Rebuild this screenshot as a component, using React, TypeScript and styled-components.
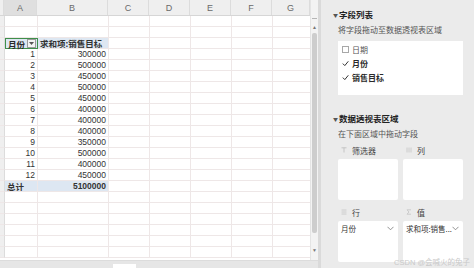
import React from "react";
import styled, { createGlobalStyle } from "styled-components";

const GlobalStyle = createGlobalStyle`
  html, body {
    margin: 0;
    padding: 0;
    background: #ffffff;
  }
  body {
    font-family: "Liberation Sans", "Noto Sans CJK SC", sans-serif;
    color: #333333;
  }
`;

const COLS = [
  { key: "corner", label: "", width: 4 },
  { key: "A", label: "A", width: 33 },
  { key: "B", label: "B", width: 71 },
  { key: "C", label: "C", width: 41 },
  { key: "D", label: "D", width: 41 },
  { key: "E", label: "E", width: 41 },
  { key: "F", label: "F", width: 41 },
  { key: "G", label: "G", width: 38 },
];

const DATA: [number, number][] = [
  [1, 300000],
  [2, 500000],
  [3, 450000],
  [4, 500000],
  [5, 450000],
  [6, 400000],
  [7, 400000],
  [8, 400000],
  [9, 350000],
  [10, 500000],
  [11, 400000],
  [12, 450000],
];

const Page = styled.div`
  display: flex;
  width: 474px;
  height: 268px;
  overflow: hidden;
  background: #ffffff;
`;

const Sheet = styled.div`
  display: flex;
  flex-direction: column;
  width: 318px;
  height: 268px;
`;

const SheetBody = styled.div`
  display: flex;
  flex: 1;
  min-height: 0;
`;

const Grid = styled.div`
  display: flex;
  flex-direction: column;
  width: 310px;
  overflow: hidden;
`;

const HeaderRow = styled.div`
  display: flex;
  height: 16px;
  flex-shrink: 0;
  background: #efefef;
  border-bottom: 1px solid #d6d6d6;
  box-sizing: border-box;
`;

const HeaderCell = styled.div<{ $w: number; $active?: boolean }>`
  width: ${({ $w }) => $w}px;
  flex-shrink: 0;
  display: flex;
  align-items: center;
  justify-content: center;
  font-size: 9px;
  color: #6a6a6a;
  background: ${({ $active }) => ($active ? "#dfdfdf" : "transparent")};
  border-right: 1px solid #dcdcdc;
  box-sizing: border-box;
`;

const Row = styled.div`
  display: flex;
  height: 11px;
  flex-shrink: 0;
`;

const Cell = styled.div<{ $w: number; $bg?: string; $align?: string; $bold?: boolean; $corner?: boolean }>`
  width: ${({ $w }) => $w}px;
  flex-shrink: 0;
  display: flex;
  align-items: center;
  justify-content: ${({ $align }) => $align || "flex-start"};
  padding: 0 2px;
  box-sizing: border-box;
  font-size: 8.5px;
  font-weight: ${({ $bold }) => ($bold ? 700 : 400)};
  color: #333333;
  background: ${({ $corner, $bg }) => ($corner ? "#efefef" : $bg || "transparent")};
  border-right: 1px solid ${({ $corner }) => ($corner ? "#dcdcdc" : "#eee7e7")};
  border-bottom: 1px solid #eee7e7;
  white-space: nowrap;
  overflow: hidden;
`;

const CjkText = styled.span`
  font-family: "Noto Sans CJK SC", sans-serif;
  font-size: 8.5px;
`;

const PivotHeadCell = styled.div<{ $w: number }>`
  width: ${({ $w }) => $w}px;
  flex-shrink: 0;
  display: flex;
  align-items: center;
  justify-content: space-between;
  padding: 0 1px 0 2px;
  box-sizing: border-box;
  background: #dde7f2;
  border: 1px solid #3f8f4a;
  font-family: "Noto Sans CJK SC", sans-serif;
  font-size: 8.5px;
  font-weight: 700;
  color: #2a2a2a;
`;

const DropBtn = styled.div`
  width: 7px;
  height: 7px;
  border: 1px solid #9a9a9a;
  background: #f4f4f4;
  display: flex;
  align-items: center;
  justify-content: center;
`;

const VScroll = styled.div`
  width: 8px;
  display: flex;
  flex-direction: column;
  align-items: center;
  background: #f3f3f3;
  border-left: 1px solid #e4e4e4;
  box-sizing: border-box;
  padding-top: 18px;
`;

const ScrollDash = styled.div`
  width: 5px;
  height: 1px;
  background: #b5b5b5;
`;

const ScrollArrow = styled.div`
  font-size: 5px;
  line-height: 6px;
  color: #777;
  margin-top: 5px;
`;

const Thumb = styled.div`
  width: 5px;
  height: 200px;
  margin-top: 3px;
  background: #cdcdcd;
  border-radius: 2px;
`;

const BottomArrow = styled(ScrollArrow)`
  margin-top: 14px;
`;

const HBar = styled.div`
  height: 8px;
  display: flex;
  background: #e6e6e6;
  border-top: 1px solid #dcdcdc;
  box-sizing: border-box;
  padding-left: 113px;
  align-items: flex-end;
`;

const HThumb = styled.div`
  width: 23px;
  height: 4px;
  background: #ffffff;
`;

const Divider = styled.div`
  width: 3px;
  background: #dadada;
`;

const Panel = styled.div`
  position: relative;
  flex: 1;
  background: #ebebeb;
  padding: 6px 11px 0 12px;
  box-sizing: border-box;
  display: flex;
  flex-direction: column;
  font-family: "Noto Sans CJK SC", sans-serif;
`;

const SectionTitle = styled.div<{ $top: number }>`
  display: flex;
  align-items: center;
  gap: 2px;
  height: 12px;
  margin-top: ${({ $top }) => $top}px;
  font-size: 8.5px;
  font-weight: 700;
  color: #222;
`;

const Caret = styled.span`
  font-size: 5px;
  color: #555;
  width: 4px;
`;

const Hint = styled.div`
  margin-top: 4px;
  margin-left: 5px;
  height: 12px;
  line-height: 12px;
  font-size: 8px;
  color: #555;
`;

const FieldBox = styled.div`
  margin: 5px 0 0 5px;
  height: 56px;
  background: #ffffff;
  padding-top: 1px;
  box-sizing: border-box;
`;

const FieldItem = styled.div<{ $muted?: boolean }>`
  display: flex;
  align-items: center;
  gap: 3px;
  height: 14px;
  padding-left: 4px;
  font-size: 8px;
  color: ${({ $muted }) => ($muted ? "#555" : "#2a2a2a")};
  font-weight: ${({ $muted }) => ($muted ? 400 : 700)};
`;

const Check = styled.div<{ $on?: boolean }>`
  width: 7px;
  height: 7px;
  border: ${({ $on }) => ($on ? "none" : "1px solid #a8a8a8")};
  box-sizing: border-box;
  display: flex;
  align-items: center;
  justify-content: center;
`;

const AreaGrid = styled.div`
  margin: 4px 0 0 5px;
  display: grid;
  grid-template-columns: 60px 60px;
  column-gap: 5px;
`;

const AreaLabel = styled.div`
  display: flex;
  align-items: center;
  gap: 5px;
  height: 12px;
  padding-left: 3px;
  font-size: 8px;
  color: #444;
`;

const AreaBox = styled.div<{ $gapTop: number }>`
  height: 41px;
  margin-top: ${({ $gapTop }) => $gapTop}px;
  margin-bottom: 6px;
  background: #ffffff;
  border-radius: 2px;
  box-sizing: border-box;
`;

const AreaItem = styled.div`
  display: flex;
  align-items: center;
  justify-content: space-between;
  height: 15px;
  padding: 0 4px 0 3px;
  font-size: 7.5px;
  color: #333;
  white-space: nowrap;
`;

const Watermark = styled.div`
  position: absolute;
  right: 4px;
  bottom: 1px;
  font-size: 7.5px;
  color: #c9c9c9;
  font-family: "Liberation Sans", "Noto Sans CJK SC", sans-serif;
`;

const Chevron = () => (
  <svg width="7" height="5" viewBox="0 0 7 5">
    <path d="M0.5 0.8 L3.5 3.8 L6.5 0.8" fill="none" stroke="#777" strokeWidth="0.8" />
  </svg>
);

const Tick = () => (
  <svg width="7" height="7" viewBox="0 0 7 7">
    <path d="M0.8 3.6 L2.8 5.6 L6.3 1.3" fill="none" stroke="#333" strokeWidth="1" />
  </svg>
);

const FilterIcon = () => (
  <svg width="6" height="6" viewBox="0 0 6 6">
    <path d="M0.5 0.8 H5.5 M3 0.8 V5.5" stroke="#bbb" strokeWidth="0.8" fill="none" />
  </svg>
);

const ColIcon = () => (
  <svg width="6" height="6" viewBox="0 0 6 6">
    <path d="M1 0.5 V5.5 M3 0.5 V5.5 M5 0.5 V5.5" stroke="#c4c4c4" strokeWidth="0.8" />
  </svg>
);

const RowIcon = () => (
  <svg width="6" height="6" viewBox="0 0 6 6">
    <path d="M0.5 1 H5.5 M0.5 3 H5.5 M0.5 5 H5.5" stroke="#c4c4c4" strokeWidth="0.8" />
  </svg>
);

const SumIcon = () => (
  <svg width="6" height="6" viewBox="0 0 6 6">
    <path d="M5 0.8 H1 L3 3 L1 5.2 H5" stroke="#c4c4c4" strokeWidth="0.8" fill="none" />
  </svg>
);

const EMPTY_ROWS = 22;

const App: React.FC = () => {
  const renderRow = (i: number) => {
    const cells: React.ReactNode[] = [];
    COLS.forEach((c, ci) => {
      if (ci === 0) {
        cells.push(<Cell key={c.key} $w={c.width} $corner />);
        return;
      }
      if (i === 2 && c.key === "A") {
        cells.push(
          <PivotHeadCell key={c.key} $w={c.width}>
            月份
            <DropBtn>
              <svg width="5" height="3" viewBox="0 0 5 3">
                <path d="M0 0 H5 L2.5 3 Z" fill="#555" />
              </svg>
            </DropBtn>
          </PivotHeadCell>
        );
        return;
      }
      if (i === 2 && c.key === "B") {
        cells.push(
          <Cell key={c.key} $w={c.width} $bg="#dde7f2" $bold>
            <CjkText>求和项:销售目标</CjkText>
          </Cell>
        );
        return;
      }
      const d = DATA[i - 3];
      if (d && c.key === "A") {
        cells.push(
          <Cell key={c.key} $w={c.width} $align="flex-end">
            {d[0]}
          </Cell>
        );
        return;
      }
      if (d && c.key === "B") {
        cells.push(
          <Cell key={c.key} $w={c.width} $align="flex-end">
            {d[1]}
          </Cell>
        );
        return;
      }
      if (i === 15 && c.key === "A") {
        cells.push(
          <Cell key={c.key} $w={c.width} $bg="#dde7f2" $bold>
            <CjkText>总计</CjkText>
          </Cell>
        );
        return;
      }
      if (i === 15 && c.key === "B") {
        cells.push(
          <Cell key={c.key} $w={c.width} $bg="#dde7f2" $bold $align="flex-end">
            5100000
          </Cell>
        );
        return;
      }
      cells.push(<Cell key={c.key} $w={c.width} />);
    });
    return <Row key={i}>{cells}</Row>;
  };

  return (
    <>
      <GlobalStyle />
      <Page>
        <Sheet>
          <SheetBody>
            <Grid>
              <HeaderRow>
                {COLS.map((c) => (
                  <HeaderCell key={c.key} $w={c.width} $active={c.key === "A"}>
                    {c.label}
                  </HeaderCell>
                ))}
              </HeaderRow>
              {Array.from({ length: EMPTY_ROWS }, (_, i) => renderRow(i))}
            </Grid>
            <VScroll>
              <ScrollDash />
              <ScrollArrow>▲</ScrollArrow>
              <Thumb />
              <BottomArrow>▼</BottomArrow>
            </VScroll>
          </SheetBody>
          <HBar>
            <HThumb />
          </HBar>
        </Sheet>
        <Divider />
        <Panel>
          <SectionTitle $top={2}>
            <Caret>▼</Caret>字段列表
          </SectionTitle>
          <Hint>将字段拖动至数据透视表区域</Hint>
          <FieldBox>
            <FieldItem $muted>
              <Check />
              日期
            </FieldItem>
            <FieldItem>
              <Check $on>
                <Tick />
              </Check>
              月份
            </FieldItem>
            <FieldItem>
              <Check $on>
                <Tick />
              </Check>
              销售目标
            </FieldItem>
          </FieldBox>
          <SectionTitle $top={17}>
            <Caret>▼</Caret>数据透视表区域
          </SectionTitle>
          <Hint>在下面区域中拖动字段</Hint>
          <AreaGrid>
            <AreaLabel>
              <FilterIcon />
              筛选器
            </AreaLabel>
            <AreaLabel>
              <ColIcon />
              列
            </AreaLabel>
            <AreaBox $gapTop={3} />
            <AreaBox $gapTop={3} />
            <AreaLabel>
              <RowIcon />
              行
            </AreaLabel>
            <AreaLabel>
              <SumIcon />
              值
            </AreaLabel>
            <AreaBox $gapTop={3}>
              <AreaItem>
                月份
                <Chevron />
              </AreaItem>
            </AreaBox>
            <AreaBox $gapTop={3}>
              <AreaItem>
                求和项:销售...
                <Chevron />
              </AreaItem>
            </AreaBox>
          </AreaGrid>
          <Watermark>CSDN @会喊火的兔子</Watermark>
        </Panel>
      </Page>
    </>
  );
};

export default App;
